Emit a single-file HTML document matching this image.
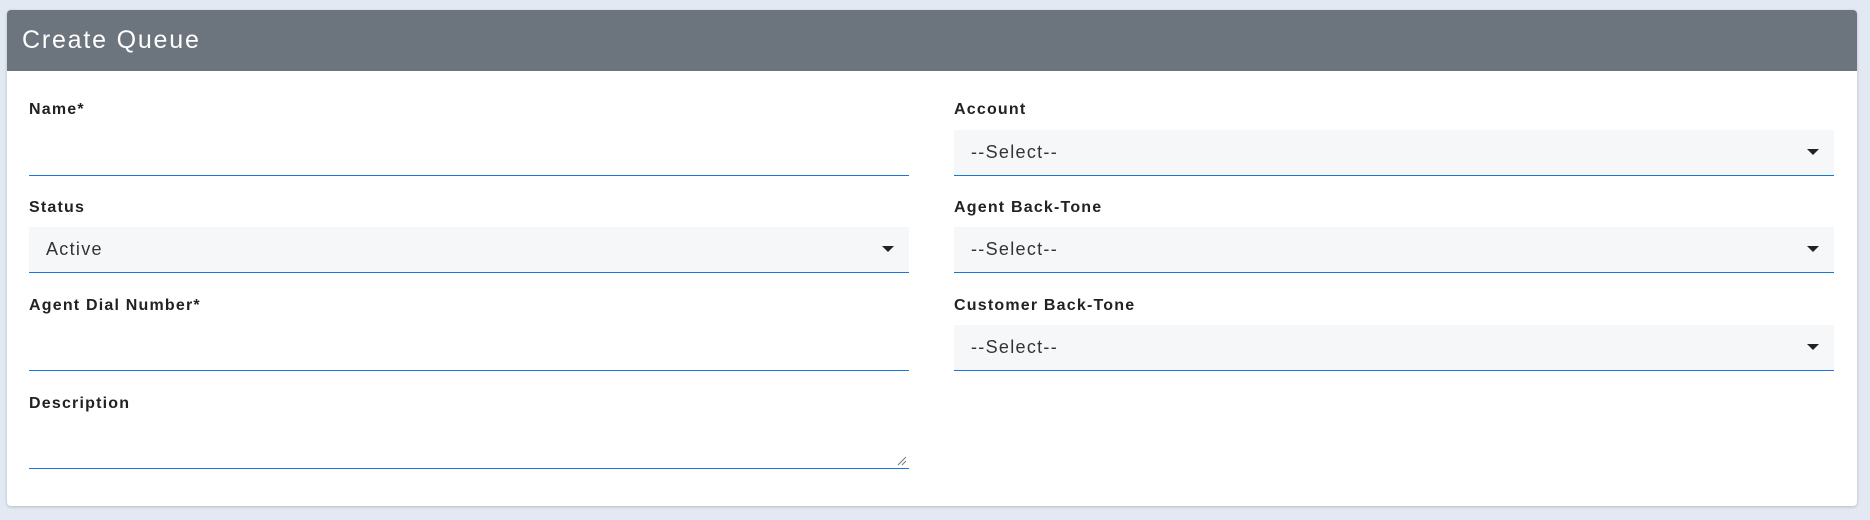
<!DOCTYPE html>
<html><head><style>
body{margin:0;width:1870px;height:520px;background:#e3e9f2;font-family:"Liberation Sans",sans-serif;position:relative;overflow:hidden}
.card{position:absolute;left:7px;top:10px;width:1850px;height:496px;background:#fff;border-radius:4px;box-shadow:0 1px 3px rgba(0,0,0,.2);overflow:hidden}
.hd{height:61px;background:#6c747e;color:#fff;font-size:25px;line-height:61px;padding-left:15px;font-weight:300;letter-spacing:1.8px}
.lbl{position:absolute;font-size:16px;font-weight:bold;color:#222;letter-spacing:1.2px}
.inp{position:absolute;height:46px;border-bottom:1px solid #1976d2;box-sizing:border-box}
.sel{background:#f6f7f9;font-size:18px;color:#333;line-height:44px;padding-left:17px;letter-spacing:1.3px}
.sel::after{content:"";position:absolute;right:15px;top:19px;border-left:6px solid transparent;border-right:6px solid transparent;border-top:6px solid #222}
</style></head><body>
<div class="card"><div class="hd">Create Queue</div></div>
<div class="lbl" style="left:29px;top:101px">Name*</div>
<div class="inp" style="left:29px;top:130px;width:880px"></div>
<div class="lbl" style="left:29px;top:199px">Status</div>
<div class="inp sel" style="left:29px;top:227px;width:880px">Active</div>
<div class="lbl" style="left:29px;top:297px">Agent Dial Number*</div>
<div class="inp" style="left:29px;top:325px;width:880px"></div>
<div class="lbl" style="left:29px;top:395px">Description</div>
<div class="inp" style="left:29px;top:423px;width:880px"><svg style="position:absolute;right:2px;bottom:2px" width="10" height="10"><path d="M1 9L9 1M5 9L9 5" stroke="#777" stroke-width="1"/></svg></div>
<div class="lbl" style="left:954px;top:101px">Account</div>
<div class="inp sel" style="left:954px;top:130px;width:880px">--Select--</div>
<div class="lbl" style="left:954px;top:199px">Agent Back-Tone</div>
<div class="inp sel" style="left:954px;top:227px;width:880px">--Select--</div>
<div class="lbl" style="left:954px;top:297px">Customer Back-Tone</div>
<div class="inp sel" style="left:954px;top:325px;width:880px">--Select--</div>
</body></html>
